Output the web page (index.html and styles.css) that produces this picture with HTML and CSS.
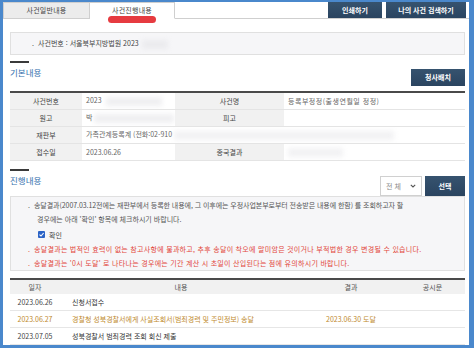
FILE: index.html
```html
<!DOCTYPE html>
<html lang="ko">
<head>
<meta charset="utf-8">
<link rel="stylesheet" href="styles.css">
</head>
<body>
<div class="frame">
  <div class="tabs">
    <div class="tab">사건일반내용</div>
    <div class="tab active">사건진행내용</div>
    <div class="tab-fill"></div>
    <div class="tab-btns">
      <button class="btn btn-print">인쇄하기</button>
      <button class="btn btn-search">나의 사건 검색하기</button>
    </div>
  </div>
  <span class="mark"></span>

  <div class="content">
    <div class="case-box"><span class="dot">.</span>사건번호 : 서울북부지방법원 2023<span class="blur blur-case"></span></div>

    <div class="sec-head">
      <div class="sec-title"><span class="bar"></span><h2>기본내용</h2></div>
      <button class="btn btn-map">청사배치</button>
    </div>

    <table class="info">
      <colgroup><col class="c1"><col class="c2"><col class="c3"><col class="c4"></colgroup>
      <tr><th>사건번호</th><td>2023<span class="blur blur-no"></span></td><th>사건명</th><td class="wide">등록부정정(출생연월일 정정)</td></tr>
      <tr><th>원고</th><td>박<span class="blur blur-name"></span></td><th>피고</th><td></td></tr>
      <tr><th>재판부</th><td colspan="3">가족관계등록계 (전화:02-910<span class="blur blur-tel"></span></td></tr>
      <tr><th>접수일</th><td>2023.06.26</td><th>종국결과</th><td><span class="blur blur-res"></span></td></tr>
    </table>

    <div class="sec-head sec-head2">
      <div class="sec-title"><span class="bar"></span><h2>진행내용</h2></div>
      <div class="filter">
        <div class="sel"><span>전 체</span><svg width="6" height="4" viewBox="0 0 6 4"><path d="M0.8 0.8 L3 3 L5.2 0.8" fill="none" stroke="#555" stroke-width="1.1"/></svg></div>
        <button class="btn btn-sel">선택</button>
      </div>
    </div>

    <div class="notice">
      <div class="line first"><span class="dot">.</span>송달결과(2007.03.12전에는 재판부에서 등록한 내용에, 그 이후에는 우정사업본부로부터 전송받은 내용에 한함) 를 조회하고자 할</div>
      <div class="line indent">경우에는 아래 '확인' 항목에 체크하시기 바랍니다.</div>
      <div class="check"><svg width="7" height="7" viewBox="0 0 7 7"><rect x="0" y="0" width="7" height="7" rx="1" fill="#2b63c6"/><path d="M1.5 3.6 L3 5 L5.6 2" fill="none" stroke="#fff" stroke-width="1.1"/></svg><span>확인</span></div>
      <div class="line red"><span class="dot">.</span>송달결과는 법적인 효력이 없는 참고사항에 불과하고, 추후 송달이 착오에 말미암은 것이거나 부적법한 경우 변경될 수 있습니다.</div>
      <div class="line red"><span class="dot">.</span>송달결과는 '0시 도달' 로 나타나는 경우에는 기간 계산 시 초일이 산입된다는 점에 유의하시기 바랍니다.</div>
    </div>

    <table class="prog">
      <colgroup><col class="p1"><col class="p2"><col class="p3"><col class="p4"></colgroup>
      <thead><tr><th>일자</th><th>내용</th><th>결과</th><th>공시문</th></tr></thead>
      <tbody>
        <tr><td class="date">2023.06.26</td><td class="txt">신청서접수</td><td></td><td></td></tr>
        <tr class="hl"><td class="date">2023.06.27</td><td class="txt">경찰청 성북경찰서에게 사실조회서(범죄경력 및 주민정보) 송달</td><td class="res">2023.06.30 도달</td><td></td></tr>
        <tr><td class="date">2023.07.05</td><td class="txt">성북경찰서 범죄경력 조회 회신 제출</td><td></td><td></td></tr>
      </tbody>
    </table>
  </div>
</div>
</body>
</html>
```

FILE: styles.css
```css
* { box-sizing: border-box; margin: 0; padding: 0; }
html, body { width: 474px; height: 348px; overflow: hidden; background: #fff; }
body {
  font-family: "Noto Sans CJK KR", "Noto Sans", sans-serif;
  font-size: 7px;
  color: #555;
}
.frame {
  position: relative;
  width: 474px;
  height: 348px;
  border: solid #4a88cc;
  border-width: 2px 5px 3px 3px;
  overflow: hidden;
  background: #fff;
}
.tabs { display: flex; height: 17px; }
.tab {
  width: 87px;
  height: 17px;
  line-height: 15px;
  text-align: center;
  background: #ececec;
  border: 1px solid #cfcfcf;
  color: #444;
  letter-spacing: 0.2px;
}
.tab.active {
  width: 85px;
  background: #fff;
  border-left: none;
  border-bottom-color: #fff;
}
.tab-fill { flex: 1; border-bottom: 1px solid #cfcfcf; }
.tab-btns { display: flex; gap: 4px; padding-right: 3px; border-bottom: 1px solid #cfcfcf; }
.btn {
  border: none;
  background: linear-gradient(#36536f, #2a4460);
  color: #fff;
  font-family: inherit;
  font-size: 7px;
  font-weight: bold;
  height: 16px;
  line-height: 16px;
  text-align: center;
}
.btn-print { width: 54px; }
.btn-search { width: 80px; }
.mark {
  position: absolute;
  left: 105px;
  top: 14px;
  width: 48px;
  height: 7px;
  border-radius: 3.5px;
  background: #e63b40;
}
.content { padding: 0 4px 0 7px; }
.case-box {
  margin-top: 13px;
  height: 23px;
  line-height: 21px;
  border: 1px solid #e0e0e0;
  background: #f6f6f8;
  padding-left: 21px;
  color: #444;
  white-space: nowrap;
}
.dot { display: inline-block; width: 6px; }
.blur {
  display: inline-block;
  vertical-align: middle;
  height: 9px;
  background: #e2e2e6;
  filter: blur(2.5px);
  opacity: 0.55;
}
.blur-case { width: 26px; margin-left: 3px; }
.blur-no { width: 56px; margin-left: 4px; }
.blur-name { width: 80px; margin-left: 2px; }
.blur-tel { width: 220px; margin-left: 2px; opacity: 0.45; }
.blur-res { width: 55px; opacity: 0.45; }

.sec-head { display: flex; justify-content: space-between; margin-top: 6px; height: 25px; }
.sec-title { display: flex; flex-direction: column; }
.bar { display: block; width: 19px; height: 2px; background: #3a3a3a; }
h2 {
  margin-top: 3px;
  font-size: 8.5px;
  line-height: 12px;
  font-weight: normal;
  color: #3470ad;
}
.btn-map { margin-top: 8px; width: 54px; height: 17px; line-height: 17px; }

table { width: 100%; border-collapse: collapse; table-layout: fixed; }
.info { margin-top: 5px; border-top: 2px solid #4a4a4a; }
.c1 { width: 72px; } .c2 { width: 93px; } .c3 { width: 109px; } .c4 { width: 181px; }
.info th, .info td {
  height: 17px;
  border-bottom: 1px solid #e4e4e4;
  font-weight: normal;
  white-space: nowrap;
  overflow: hidden;
}
.info th { background: #f1f1f1; color: #444; text-align: center; }
.info td { padding-left: 4px; color: #666; text-align: left; }
.info td.wide { letter-spacing: 0.5px; }

.sec-head2 { margin-top: 8px; height: 27px; }
.filter { display: flex; gap: 3px; margin-top: 7px; }
.sel {
  width: 42px;
  height: 20px;
  border: 1px solid #d0d0d0;
  background: #fff;
  display: flex;
  align-items: center;
  justify-content: space-between;
  padding: 0 5px 0 5px;
  color: #888;
}
.btn-sel { width: 40px; height: 20px; line-height: 20px; }

.notice {
  border: 1px solid #e0e0e0;
  background: #f6f6f8;
  padding: 1px 0 0 17px;
  height: 75px;
}
.line { line-height: 14px; height: 14px; white-space: nowrap; color: #555; }
.line.first { letter-spacing: -0.07px; }
.line.indent { padding-left: 9px; }
.line.red { color: #e2473c; letter-spacing: 0.28px; }
.check { display: flex; align-items: center; gap: 4px; margin: 2px 0 0 10px; height: 14px; color: #444; }

.prog { margin-top: 7px; border-top: 2px solid #4a4a4a; }
.p1 { width: 50px; } .p2 { width: 242px; } .p3 { width: 98px; } .p4 { width: 65px; }
.prog th {
  height: 15px;
  background: #f1f1f1;
  font-weight: normal;
  color: #555;
  text-align: center;
}
.prog td {
  height: 17px;
  border-bottom: 1px solid #e6e6e6;
  white-space: nowrap;
  overflow: hidden;
  color: #333;
}
.prog .date { text-align: center; color: #444; }
.prog .txt { padding-left: 12px; }
.prog .res { text-align: center; }
.prog .hl td { color: #c08a2e; }
```
